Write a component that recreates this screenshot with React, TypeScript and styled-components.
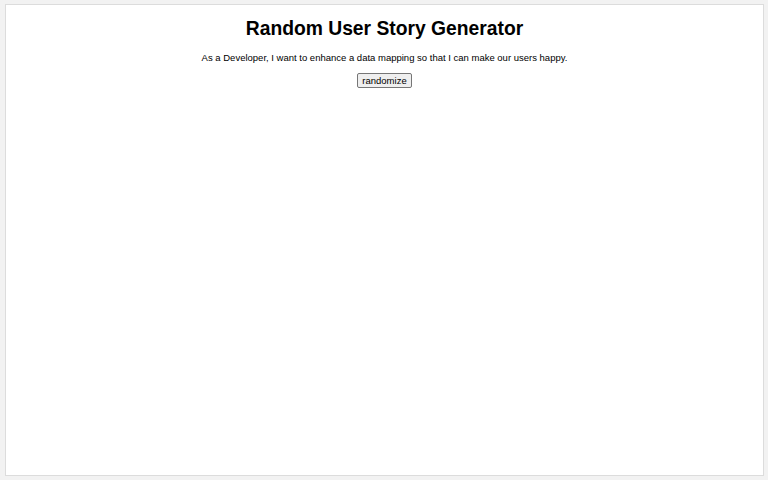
import React, { useState } from "react";
import styled, { createGlobalStyle } from "styled-components";

const GlobalStyle = createGlobalStyle`
  html, body {
    margin: 0;
    padding: 0;
    background: #f2f2f2;
    font-family: "Liberation Sans", Arial, sans-serif;
  }
`;

const Page = styled.div`
  box-sizing: border-box;
  height: 480px;
  padding: 4px 4px 4px 5px;
  display: flex;
`;

const Card = styled.main`
  flex: 1;
  background: #ffffff;
  border: 1px solid #dcdcdc;
  display: flex;
  flex-direction: column;
  align-items: center;
  padding-top: 14px;
`;

const Title = styled.h1`
  margin: 0;
  font-size: 19.3px;
  font-weight: bold;
  color: #000;
  line-height: 20px;
`;

const Story = styled.p`
  margin: 13px 0 0;
  font-size: 9.5px;
  line-height: 12px;
  color: #000;
`;

const Button = styled.button`
  margin-top: 9px;
  font-family: "Liberation Sans", Arial, sans-serif;
  font-size: 9.5px;
  line-height: 12px;
  padding: 0 4px;
  height: 15px;
  color: #000;
  background: #efefef;
  border: 1px solid #767676;
  border-radius: 2px;
`;

const roles = ["Developer", "User", "Admin", "Manager"];
const actions = ["enhance", "build", "refactor", "review"];
const things = ["a data mapping", "a dashboard", "an API", "a report"];
const goals = ["make our users happy", "ship faster", "reduce bugs", "save time"];

const pick = (xs: string[]) => xs[Math.floor(Math.random() * xs.length)];

export default function App() {
  const [story, setStory] = useState(
    "As a Developer, I want to enhance a data mapping so that I can make our users happy."
  );
  const randomize = () =>
    setStory(
      `As a ${pick(roles)}, I want to ${pick(actions)} ${pick(things)} so that I can ${pick(goals)}.`
    );
  return (
    <>
      <GlobalStyle />
      <Page>
        <Card>
          <Title>Random User Story Generator</Title>
          <Story>{story}</Story>
          <Button onClick={randomize}>randomize</Button>
        </Card>
      </Page>
    </>
  );
}
